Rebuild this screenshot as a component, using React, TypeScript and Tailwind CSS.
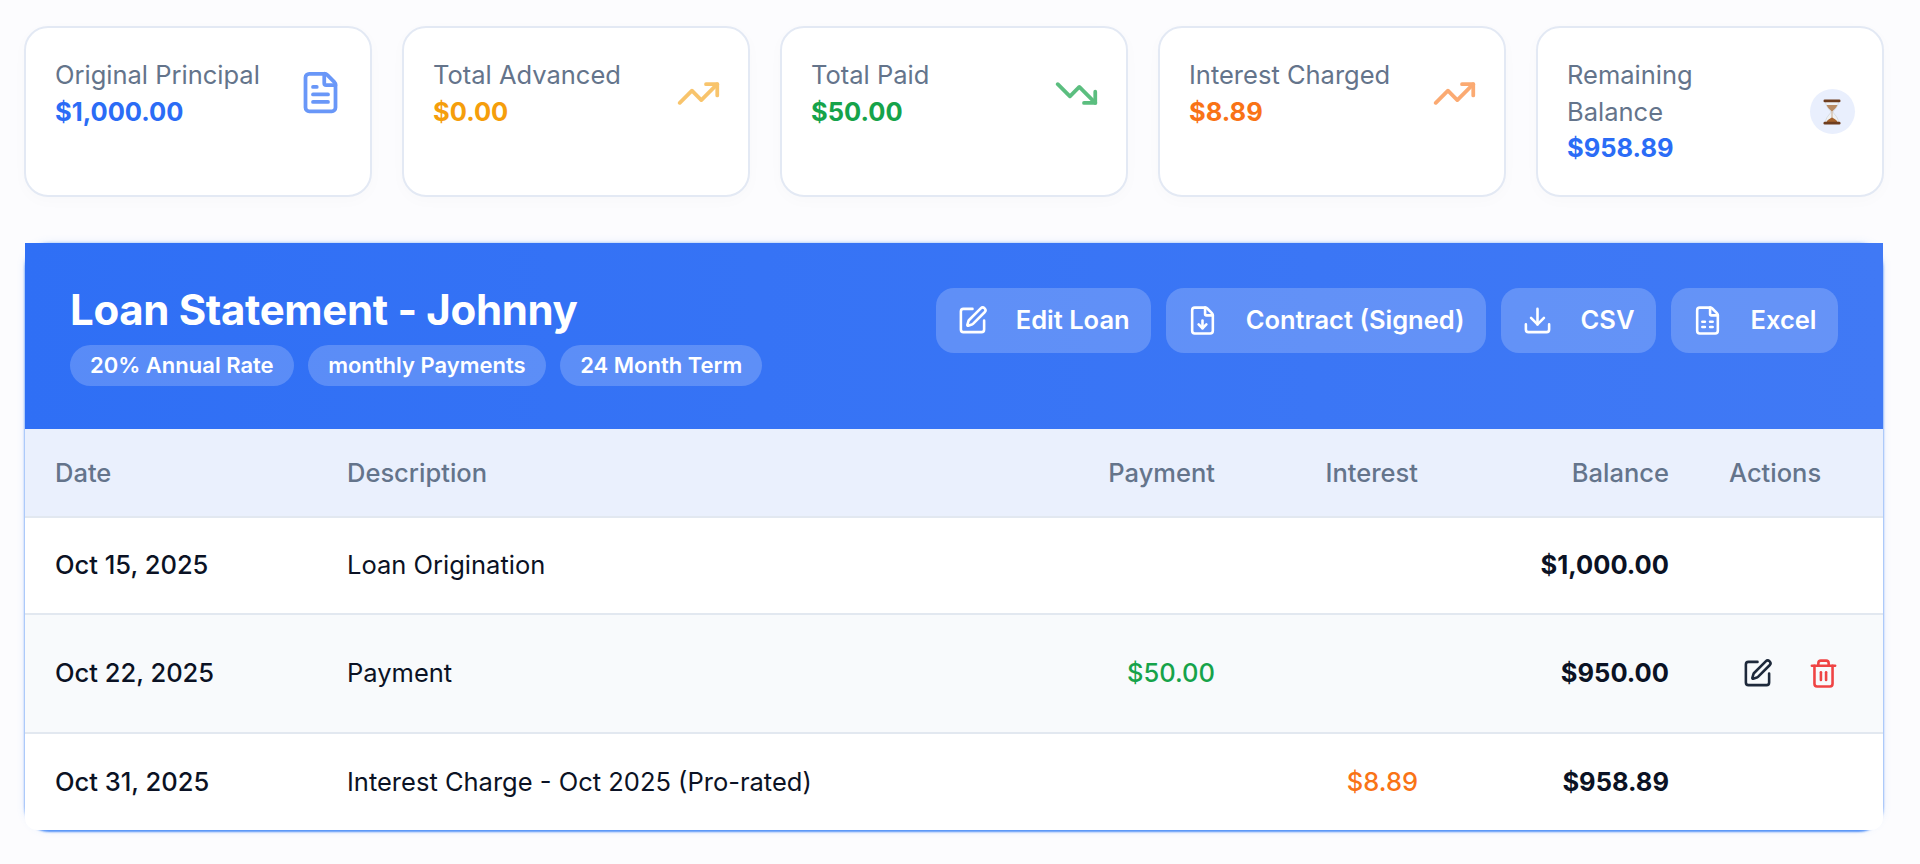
import { Download, FileDown, FileSpreadsheet, FileText, SquarePen, Trash2, TrendingDown, TrendingUp } from 'lucide-react';
import type { ReactNode } from 'react';

type Stat = {
  label: string;
  value: string;
  color: string;
  icon: ReactNode;
};

const Hourglass = () => (
  <svg width="18" height="26" viewBox="0 0 18 26">
    <path d="M2.5 2 H15.5 C15.5 8 11 10.5 10 13 C11 15.5 15.5 18 15.5 24 H2.5 C2.5 18 7 15.5 8 13 C7 10.5 2.5 8 2.5 2Z" fill="#eef1f4" stroke="#c9ced3" strokeWidth="0.6" />
    <path d="M3.6 6 H14.4 C13.6 9 10.6 10.6 9 13 C7.4 10.6 4.4 9 3.6 6Z" fill="#b88a62" />
    <path d="M9 13 V21" stroke="#b98a5e" strokeWidth="0.7" />
    <path d="M3.2 23.5 C4.4 20.5 7.4 19.6 9 18.5 C10.6 19.6 13.6 20.5 14.8 23.5Z" fill="#a5622c" />
    <rect x="0.5" y="0.5" width="17" height="2.8" rx="1.2" fill="#6e3d1e" />
    <rect x="0.5" y="22.7" width="17" height="2.8" rx="1.2" fill="#6e3d1e" />
  </svg>
);

const STATS: Stat[] = [
  { label: 'Original Principal', value: '$1,000.00', color: 'text-[#2b6cf6]', icon: <FileText size={45} strokeWidth={2} className="-translate-y-px text-[#2b6cf6] opacity-70" /> },
  { label: 'Total Advanced', value: '$0.00', color: 'text-[#f59e0b]', icon: <TrendingUp size={45} strokeWidth={2} className="text-[#f59e0b] opacity-60" /> },
  { label: 'Total Paid', value: '$50.00', color: 'text-[#16a34a]', icon: <TrendingDown size={45} strokeWidth={2} className="text-[#16a34a] opacity-70" /> },
  { label: 'Interest Charged', value: '$8.89', color: 'text-[#f97316]', icon: <TrendingUp size={45} strokeWidth={2} className="text-[#f97316] opacity-60" /> },
  {
    label: 'Remaining Balance',
    value: '$958.89',
    color: 'text-[#2b6cf6]',
    icon: (
      <div className="flex h-[45px] w-[45px] items-center justify-center rounded-full bg-[#e9effd]">
        <Hourglass />
      </div>
    ),
  },
];

const BUTTONS = [
  { label: 'Edit Loan', icon: <SquarePen size={31} strokeWidth={2} /> },
  { label: 'Contract (Signed)', icon: <FileDown size={31} strokeWidth={2} /> },
  { label: 'CSV', icon: <Download size={31} strokeWidth={2} /> },
  { label: 'Excel', icon: <FileSpreadsheet size={31} strokeWidth={2} /> },
];

const PILLS = ['20% Annual Rate', 'monthly Payments', '24 Month Term'];

export default function App() {
  return (
    <div className="min-h-[864px] bg-[#fcfcfe] pl-6 pr-9 pt-[26px] font-['Inter',sans-serif] text-[#0b1224]">
      {/* Stat cards */}
      <div className="grid grid-cols-5 gap-[30px]">
        {STATS.map((s) => (
          <div key={s.label} className="h-[171px] rounded-[24px] border-2 border-[#e3e9f4] bg-white pl-[29px] pr-[26px] pt-[29px] shadow-[0_4px_16px_rgba(15,23,42,0.02)]">
            <div className="flex items-center justify-between gap-4">
              <div>
                <div className="text-[25.5px] leading-[36.5px] text-[#64748b]">{s.label}</div>
                <div className={`text-[25.5px] font-bold leading-[36.5px] ${s.color}`}>{s.value}</div>
              </div>
              <div className="flex w-12 shrink-0 justify-center">{s.icon}</div>
            </div>
          </div>
        ))}
      </div>

      {/* Statement */}
      <div className="mx-px mt-[46px] rounded-[24px] shadow-[0_2px_2px_rgba(59,130,246,0.8),0_0_3px_rgba(59,130,246,0.55),0_0_10px_rgba(59,130,246,0.12)]">
        <div className="overflow-hidden rounded-b-[12px] bg-white">
          <div className="flex h-[186px] items-start justify-between bg-gradient-to-r from-[#2f6ff5] to-[#4079f5] pl-[45px] pr-[45px] pt-[42px] text-white">
            <div>
              <h1 className="text-[42px] font-bold leading-[50px] tracking-[-0.35px]">Loan Statement - Johnny</h1>
              <div className="mt-[10px] flex gap-[14.5px]">
                {PILLS.map((p) => (
                  <span key={p} className="flex h-[41px] items-center rounded-full bg-white/20 px-5 text-[22px] font-semibold">
                    {p}
                  </span>
                ))}
              </div>
            </div>
            <div className="mt-[3px] flex gap-[15px]">
              {BUTTONS.map((b) => (
                <button key={b.label} className="flex h-[65px] items-center gap-[27.5px] rounded-[18px] bg-white/20 pl-[21px] pr-[21.5px] text-[25.5px] font-semibold">
                  {b.icon}
                  {b.label}
                </button>
              ))}
            </div>
          </div>

          <table className="w-full table-fixed border-collapse text-[25.5px]">
            <colgroup>
              <col className="w-[292px]" />
              <col />
              <col className="w-[203px]" />
              <col className="w-[203px]" />
              <col className="w-[251px]" />
              <col className="w-[184px]" />
            </colgroup>
            <thead>
              <tr className="h-[88px] border-b-2 border-[#e2e8f0] bg-[#eaf0fd] text-[#64748b]">
                <th className="px-[30px] pt-px text-left font-[550]">Date</th>
                <th className="px-[30px] pt-px text-left font-[550]">Description</th>
                <th className="px-[30px] pt-px text-right font-[550]">Payment</th>
                <th className="px-[30px] pt-px text-right font-[550]">Interest</th>
                <th className="px-[30px] pt-px text-right font-[550]">Balance</th>
                <th className="px-[30px] pt-px text-left font-[550]">Actions</th>
              </tr>
            </thead>
            <tbody>
              <tr className="h-[97px] border-b-2 border-[#e2e8f0]">
                <td className="px-[30px] font-medium">Oct 15, 2025</td>
                <td className="px-[30px]">Loan Origination</td>
                <td className="px-[30px]" />
                <td className="px-[30px]" />
                <td className="px-[30px] text-right font-bold">$1,000.00</td>
                <td className="px-[30px]" />
              </tr>
              <tr className="h-[119px] border-b-2 border-[#e2e8f0] bg-[#f8fafc]">
                <td className="px-[30px] font-medium">Oct 22, 2025</td>
                <td className="px-[30px]">Payment</td>
                <td className="px-[30px] text-right font-medium text-[#16a34a]">$50.00</td>
                <td className="px-[30px]" />
                <td className="px-[30px] text-right font-bold">$950.00</td>
                <td className="px-[30px]">
                  <div className="flex items-center gap-[35px] pl-[13px]">
                    <SquarePen size={31} strokeWidth={2} className="text-[#1e293b]" />
                    <Trash2 size={31} strokeWidth={2} className="text-[#ef4444]" />
                  </div>
                </td>
              </tr>
              <tr className="h-[97px]">
                <td className="px-[30px] font-medium">Oct 31, 2025</td>
                <td className="px-[30px]">Interest Charge - Oct 2025 (Pro-rated)</td>
                <td className="px-[30px]" />
                <td className="px-[30px] text-right font-medium text-[#f97316]">$8.89</td>
                <td className="px-[30px] text-right font-bold">$958.89</td>
                <td className="px-[30px]" />
              </tr>
            </tbody>
          </table>
        </div>
      </div>
    </div>
  );
}
